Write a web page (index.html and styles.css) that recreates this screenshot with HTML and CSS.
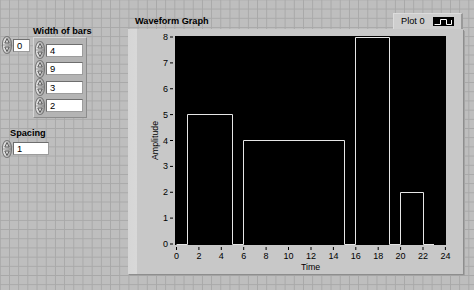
FILE: index.html
```html
<!DOCTYPE html>
<html>
<head>
<meta charset="utf-8">
<link rel="stylesheet" href="styles.css">
</head>
<body>
<div class="panel">
  <div class="left">
    <div class="top-row">
      <div class="ctrl index-ctrl">
        <div class="spin"><svg viewBox="0 0 10 18" width="10" height="18"><path d="M5 2.5 L7.2 7 H2.8 Z" fill="#d8d8d8" stroke="#505050" stroke-width="0.9"/><line x1="1" y1="9" x2="9" y2="9" stroke="#7a7a7a" stroke-width="0.7"/><path d="M5 15.5 L7.2 11 H2.8 Z" fill="#d8d8d8" stroke="#505050" stroke-width="0.9"/></svg></div>
        <div class="num w-index">0</div>
      </div>
      <div class="array-col">
        <div class="label">Width of bars</div>
        <div class="array-frame">
          <div class="ctrl"><div class="spin"><svg viewBox="0 0 10 18" width="10" height="18"><path d="M5 2.5 L7.2 7 H2.8 Z" fill="#d8d8d8" stroke="#505050" stroke-width="0.9"/><line x1="1" y1="9" x2="9" y2="9" stroke="#7a7a7a" stroke-width="0.7"/><path d="M5 15.5 L7.2 11 H2.8 Z" fill="#d8d8d8" stroke="#505050" stroke-width="0.9"/></svg></div><div class="num w-elem">4</div></div>
          <div class="ctrl"><div class="spin"><svg viewBox="0 0 10 18" width="10" height="18"><path d="M5 2.5 L7.2 7 H2.8 Z" fill="#d8d8d8" stroke="#505050" stroke-width="0.9"/><line x1="1" y1="9" x2="9" y2="9" stroke="#7a7a7a" stroke-width="0.7"/><path d="M5 15.5 L7.2 11 H2.8 Z" fill="#d8d8d8" stroke="#505050" stroke-width="0.9"/></svg></div><div class="num w-elem">9</div></div>
          <div class="ctrl"><div class="spin"><svg viewBox="0 0 10 18" width="10" height="18"><path d="M5 2.5 L7.2 7 H2.8 Z" fill="#d8d8d8" stroke="#505050" stroke-width="0.9"/><line x1="1" y1="9" x2="9" y2="9" stroke="#7a7a7a" stroke-width="0.7"/><path d="M5 15.5 L7.2 11 H2.8 Z" fill="#d8d8d8" stroke="#505050" stroke-width="0.9"/></svg></div><div class="num w-elem">3</div></div>
          <div class="ctrl"><div class="spin"><svg viewBox="0 0 10 18" width="10" height="18"><path d="M5 2.5 L7.2 7 H2.8 Z" fill="#d8d8d8" stroke="#505050" stroke-width="0.9"/><line x1="1" y1="9" x2="9" y2="9" stroke="#7a7a7a" stroke-width="0.7"/><path d="M5 15.5 L7.2 11 H2.8 Z" fill="#d8d8d8" stroke="#505050" stroke-width="0.9"/></svg></div><div class="num w-elem">2</div></div>
        </div>
      </div>
    </div>
    <div class="spacing">
      <div class="label spacing-label">Spacing</div>
      <div class="ctrl">
        <div class="spin"><svg viewBox="0 0 10 18" width="10" height="18"><path d="M5 2.5 L7.2 7 H2.8 Z" fill="#d8d8d8" stroke="#505050" stroke-width="0.9"/><line x1="1" y1="9" x2="9" y2="9" stroke="#7a7a7a" stroke-width="0.7"/><path d="M5 15.5 L7.2 11 H2.8 Z" fill="#d8d8d8" stroke="#505050" stroke-width="0.9"/></svg></div>
        <div class="num w-spacing">1</div>
      </div>
    </div>
  </div>

  <div class="graph">
    <div class="graph-head">
      <div class="label graph-label">Waveform Graph</div>
      <div class="legend">
        <span class="legend-name">Plot 0</span>
        <svg class="legend-icon" width="21" height="9" viewBox="0 0 21 9"><rect width="21" height="9" fill="#000"/><path d="M1.5 7.5 H7.5 V2.5 H13.5 V7.5 H18.5 V3" fill="none" stroke="#fff" stroke-width="1"/></svg>
      </div>
    </div>
    <div class="graph-frame">
      <svg class="chart" width="335" height="245" viewBox="0 0 335 245">
        <rect x="47" y="7" width="271" height="209" fill="#000"/>
        <g class="yticks" font-family="Liberation Sans, Arial, sans-serif" font-size="9" fill="#000" text-anchor="end">
          <text x="40" y="11">8</text><line x1="42" y1="8" x2="45" y2="8" stroke="#000"/>
          <text x="40" y="36.9">7</text><line x1="42" y1="33.9" x2="45" y2="33.9" stroke="#000"/>
          <text x="40" y="62.75">6</text><line x1="42" y1="59.75" x2="45" y2="59.75" stroke="#000"/>
          <text x="40" y="88.6">5</text><line x1="42" y1="85.6" x2="45" y2="85.6" stroke="#000"/>
          <text x="40" y="114.5">4</text><line x1="42" y1="111.5" x2="45" y2="111.5" stroke="#000"/>
          <text x="40" y="140.4">3</text><line x1="42" y1="137.4" x2="45" y2="137.4" stroke="#000"/>
          <text x="40" y="166.25">2</text><line x1="42" y1="163.25" x2="45" y2="163.25" stroke="#000"/>
          <text x="40" y="192.1">1</text><line x1="42" y1="189.1" x2="45" y2="189.1" stroke="#000"/>
          <text x="40" y="218">0</text><line x1="42" y1="215" x2="45" y2="215" stroke="#000"/>
        </g>
        <g class="xticks" font-family="Liberation Sans, Arial, sans-serif" font-size="9" fill="#000" text-anchor="middle" stroke-width="1">
          <line x1="48.5" y1="218" x2="48.5" y2="221" stroke="#000"/><text x="48.5" y="230">0</text>
          <line x1="70.9" y1="218" x2="70.9" y2="221" stroke="#000"/><text x="70.9" y="230">2</text>
          <line x1="93.3" y1="218" x2="93.3" y2="221" stroke="#000"/><text x="93.3" y="230">4</text>
          <line x1="115.7" y1="218" x2="115.7" y2="221" stroke="#000"/><text x="115.7" y="230">6</text>
          <line x1="138.1" y1="218" x2="138.1" y2="221" stroke="#000"/><text x="138.1" y="230">8</text>
          <line x1="160.5" y1="218" x2="160.5" y2="221" stroke="#000"/><text x="160.5" y="230">10</text>
          <line x1="183" y1="218" x2="183" y2="221" stroke="#000"/><text x="183" y="230">12</text>
          <line x1="205.4" y1="218" x2="205.4" y2="221" stroke="#000"/><text x="205.4" y="230">14</text>
          <line x1="227.8" y1="218" x2="227.8" y2="221" stroke="#000"/><text x="227.8" y="230">16</text>
          <line x1="250.2" y1="218" x2="250.2" y2="221" stroke="#000"/><text x="250.2" y="230">18</text>
          <line x1="272.6" y1="218" x2="272.6" y2="221" stroke="#000"/><text x="272.6" y="230">20</text>
          <line x1="295" y1="218" x2="295" y2="221" stroke="#000"/><text x="295" y="230">22</text>
          <line x1="317.4" y1="218" x2="317.4" y2="221" stroke="#000"/><text x="317.4" y="230">24</text>
        </g>
        <text x="182.5" y="241" font-family="Liberation Sans, Arial, sans-serif" font-size="8.8" text-anchor="middle" fill="#000">Time</text>
        <text transform="translate(30 111.5) rotate(-90)" font-family="Liberation Sans, Arial, sans-serif" font-size="8.8" text-anchor="middle" fill="#000">Amplitude</text>
        <path d="M48.5 215.5 H59.5 V85.5 H104.5 V215.5 H115.5 V111.5 H216.5 V215.5 H227.5 V8.5 H261.5 V215.5 H272.5 V163.5 H295.5 V215.5 H306" fill="none" stroke="#e6e6e6" stroke-width="1"/>
      </svg>
    </div>
  </div>
</div>
</body>
</html>
```

FILE: styles.css
```css
html, body {
  margin: 0;
  padding: 0;
}
body {
  width: 474px;
  height: 290px;
  overflow: hidden;
  background-color: #bebebe;
  background-image:
    linear-gradient(to right, #a8a8a8 1px, transparent 1px),
    linear-gradient(to bottom, #a8a8a8 1px, transparent 1px);
  background-size: 9.2px 9.2px;
  background-position: -0.2px -0.6px;
  font-family: "Liberation Sans", Arial, sans-serif;
  color: #000;
}
.panel {
  display: flex;
  align-items: flex-start;
}
.left {
  width: 126px;
  padding: 26px 0 0 2px;
  display: flex;
  flex-direction: column;
}
.top-row {
  display: flex;
  align-items: flex-start;
}
.label {
  font-weight: bold;
  font-size: 9.2px;
  line-height: 11px;
  white-space: nowrap;
}
.ctrl {
  display: flex;
  align-items: center;
  gap: 1px;
}
.index-ctrl {
  margin-top: 10px;
}
.spin {
  width: 10px;
  height: 18px;
  box-sizing: border-box;
  border: 1px solid #767676;
  border-radius: 5px / 8px;
  background: linear-gradient(to right, #ececec, #c6c6c6 55%, #9c9c9c);
  display: flex;
  align-items: center;
  justify-content: center;
  overflow: hidden;
}
.spin svg {
  display: block;
  flex: none;
}
.num {
  height: 13px;
  box-sizing: border-box;
  background: #fff;
  border: 1px solid #9c9c9c;
  border-top-color: #6e6e6e;
  border-left-color: #6e6e6e;
  font-size: 9.4px;
  line-height: 11px;
  padding-left: 3px;
}
.w-index { width: 17px; }
.w-elem { width: 37px; }
.w-spacing { width: 36px; }
.array-col {
  margin-left: 3px;
  display: flex;
  flex-direction: column;
}
.array-frame {
  width: 54px;
  box-sizing: border-box;
  padding: 3px 0 2px 1px;
  background: #b4b4b4;
  border: 1px solid #8c8c8c;
  border-top-color: #d6d6d6;
  border-left-color: #d6d6d6;
  display: flex;
  flex-direction: column;
  gap: 0.5px;
}
.array-frame .ctrl {
  height: 18px;
}
.spacing {
  margin-top: 10px;
  display: flex;
  flex-direction: column;
}
.spacing-label {
  margin-left: 8px;
  margin-bottom: 1px;
}
.graph {
  padding-top: 12px;
  width: 337px;
}
.graph-head {
  width: 335px;
  display: flex;
  justify-content: space-between;
  align-items: flex-end;
  height: 17px;
}
.graph-label {
  margin-left: 7px;
  margin-bottom: 2px;
}
.legend {
  width: 70px;
  height: 16px;
  box-sizing: border-box;
  background: #cecece;
  border-right: 2px solid #9a9a9a;
  border-top: 1px solid #dcdcdc;
  border-left: 1px solid #dcdcdc;
  display: flex;
  align-items: center;
  padding-left: 7px;
  gap: 8px;
}
.legend-name {
  font-size: 9.2px;
  line-height: 11px;
}
.legend-icon {
  display: block;
}
.graph-frame {
  width: 335px;
  height: 245px;
  background: linear-gradient(to right, #d6d6d6 0, #d8d8d8 9px, #c8c8c8 9px);
  box-shadow: 1px 1px 0 #8e8e8e, 2px 2px 0 #a4a4a4;
}
.chart {
  display: block;
}
```
